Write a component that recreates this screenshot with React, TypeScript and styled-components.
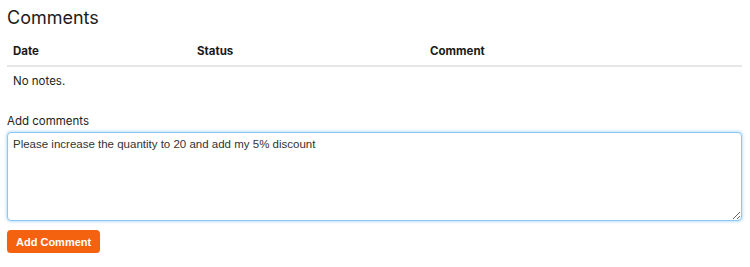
import React, { useState } from 'react';
import { createGlobalStyle, styled } from 'styled-components';

const GlobalStyle = createGlobalStyle`
  body {
    margin: 0;
    background: #ffffff;
    font-family: Inter, "Noto Sans", sans-serif;
    color: #1a1a1a;
  }
`;

const App: React.FC = () => {
  const [comment, setComment] = useState('Please increase the quantity to 20 and add my 5% discount');

  return (
    <>
      <GlobalStyle />
      <Container>
        <Title>Comments</Title>
        <Table>
          <thead>
            <tr>
              <Th $width="172px">Date</Th>
              <Th $width="221px">Status</Th>
              <Th>Comment</Th>
            </tr>
          </thead>
          <tbody>
            <tr>
              <Td colSpan={3}>No notes.</Td>
            </tr>
          </tbody>
        </Table>
        <Label htmlFor="add-comment">Add comments</Label>
        <TextArea
          id="add-comment"
          value={comment}
          onChange={(e) => setComment(e.target.value)}
        />
        <Button type="button">Add Comment</Button>
      </Container>
    </>
  );
};

export default App;

const Container = styled.div`
  display: flex;
  flex-direction: column;
  align-items: flex-start;
  padding: 5px 8px 0 7px;
`;

const Title = styled.h2`
  margin: 0;
  font-size: 18px;
  font-weight: 400;
  line-height: 26px;
  color: #1c1c1c;
`;

const Table = styled.table`
  width: 100%;
  margin-top: 8px;
  border-collapse: collapse;
  table-layout: fixed;
  font-size: 11.5px;
`;

const Th = styled.th<{ $width?: string }>`
  width: ${(p) => p.$width ?? 'auto'};
  padding: 4px 6px 6px;
  text-align: left;
  font-weight: 700;
  color: #1a1a1a;
  border-bottom: 2px solid #e6e6e6;
  line-height: 16px;
`;

const Td = styled.td`
  padding: 6px 6px 6px;
  line-height: 16px;
  color: #222;
`;

const Label = styled.label`
  margin-top: 18px;
  font-size: 11.5px;
  line-height: 16px;
  color: #222;
`;

const TextArea = styled.textarea`
  box-sizing: border-box;
  width: 100%;
  height: 89px;
  margin-top: 3px;
  padding: 5px 5px 4px;
  font-family: "Liberation Sans", Arial, sans-serif;
  font-size: 11.5px;
  color: #333;
  border: 1px solid #8cc6f2;
  border-radius: 4px;
  box-shadow: 0 0 3px 1px rgba(140, 198, 242, 0.55);
  outline: none;
  resize: vertical;
`;

const Button = styled.button`
  margin-top: 9px;
  height: 23px;
  padding: 0 9px;
  font-family: "Liberation Sans", Arial, sans-serif;
  font-size: 11px;
  font-weight: 700;
  color: #ffffff;
  background: #f4620f;
  border: none;
  border-radius: 4px;
  box-shadow: 0 1px 1px rgba(0, 0, 0, 0.15);
  cursor: pointer;
`;
